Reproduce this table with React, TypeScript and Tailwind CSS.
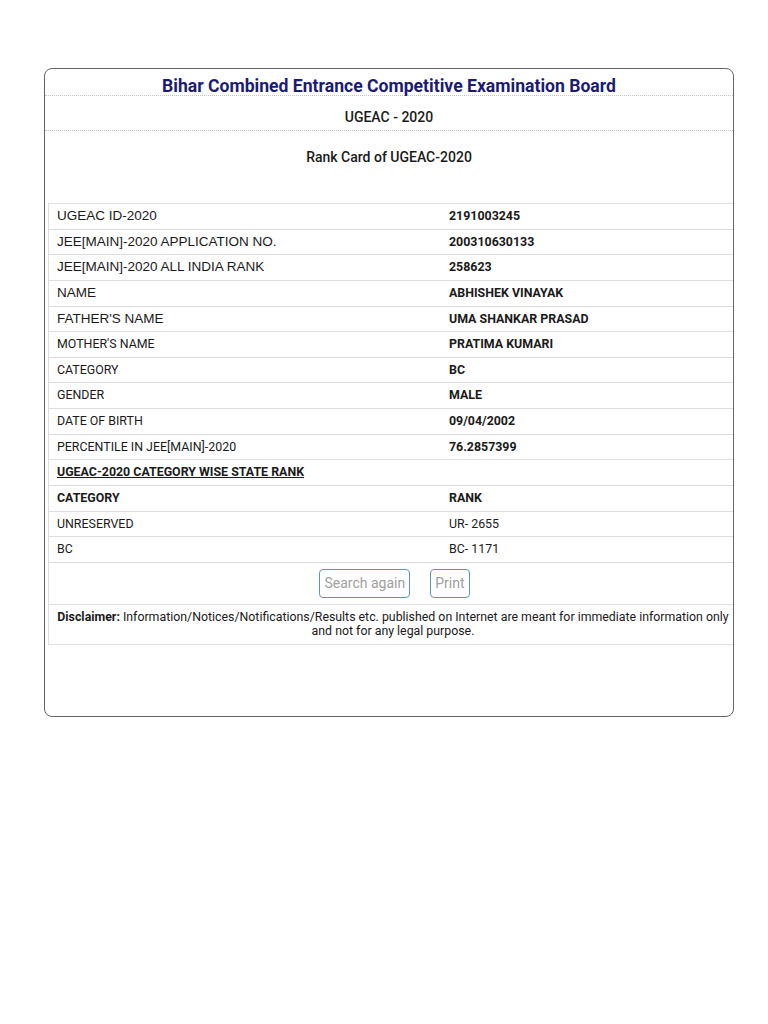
import React from "react";

const rows: [string, string, boolean][] = [
  ["UGEAC ID-2020", "2191003245", true],
  ["JEE[MAIN]-2020 APPLICATION NO.", "200310630133", true],
  ["JEE[MAIN]-2020 ALL INDIA RANK", "258623", true],
  ["NAME", "ABHISHEK VINAYAK", true],
  ["FATHER'S NAME", "UMA SHANKAR PRASAD", true],
  ["MOTHER'S NAME", "PRATIMA KUMARI", false],
  ["CATEGORY", "BC", false],
  ["GENDER", "MALE", false],
  ["DATE OF BIRTH", "09/04/2002", false],
  ["PERCENTILE IN JEE[MAIN]-2020", "76.2857399", false]
];

const ranks: [string, string][] = [
  ["UNRESERVED", "UR- 2655"],
  ["BC", "BC- 1171"]
];

const Row = ({
  label,
  value,
  labelClass = "",
  boldValue = true
}: {
  label: React.ReactNode;
  value?: string;
  labelClass?: string;
  boldValue?: boolean;
}) => (
  <div className="flex h-[25.64px] items-center border-b border-[#dedede] text-[#1a1a1a]">
    <div className={`w-[400px] pl-[8px] ${labelClass}`}>{label}</div>
    <div className={`text-[12.4px] ${boldValue ? "font-bold" : ""}`}>{value}</div>
  </div>
);

export default function App() {
  return (
    <div className="min-h-[1024px] bg-white pt-[68px] pl-[44px]" style={{ fontFamily: "Roboto, 'Liberation Sans', sans-serif" }}>
      <div className="flex h-[649px] w-[690px] flex-col rounded-[8px] border-[1.5px] border-[#666666]">
        <div className="flex h-[27px] justify-center border-b border-dotted border-[#c4c4c4] pt-[9px] text-[17.6px] leading-[16px] font-bold text-[#1b1b72]">
          Bihar Combined Entrance Competitive Examination Board
        </div>
        <div className="flex h-[35px] justify-center border-b border-dotted border-[#c4c4c4] pt-[13px] text-[14px] leading-[16px] font-medium text-[#1a1a1a]">
          UGEAC - 2020
        </div>
        <div className="flex h-[72px] justify-center pt-[16px] text-[14px] font-medium text-[#1a1a1a]">
          Rank Card of UGEAC-2020
        </div>
        <div className="ml-[3px] border-l border-t border-[#dedede]">
          {rows.map(([l, v, wide]) => (
            <Row
              key={l}
              label={l}
              value={v}
              labelClass={wide ? "font-['Liberation_Sans',sans-serif] text-[13.5px]" : "text-[12.4px]"}
            />
          ))}
          <Row
            label={<span className="underline">UGEAC-2020 CATEGORY WISE STATE RANK</span>}
            labelClass="font-bold text-[12.4px]"
          />
          <Row label="CATEGORY" value="RANK" labelClass="font-bold text-[12.4px]" />
          {ranks.map(([l, v]) => (
            <Row key={l} label={l} value={v} labelClass="text-[12.4px]" boldValue={false} />
          ))}
          <div className="flex h-[42px] items-center justify-center gap-[20px] border-b border-[#dedede] pl-[7px]">
            <button className="h-[29px] rounded-[4px] border border-[#5c9bab] px-[4px] text-[14px] text-[#a0a0a0]">
              Search again
            </button>
            <button className="h-[29px] rounded-[4px] border border-[#5c9bab] px-[4px] text-[14px] text-[#a0a0a0]">
              Print
            </button>
          </div>
          <div className="h-[40px] border-b border-[#dedede] pl-[4px] pt-[5px] text-center text-[12.35px] leading-[14px] text-[#1a1a1a]">
            <span className="font-bold">Disclaimer:</span> Information/Notices/Notifications/Results etc. published on Internet are meant for immediate information only and not for any legal purpose.
          </div>
        </div>
      </div>
    </div>
  );
}
